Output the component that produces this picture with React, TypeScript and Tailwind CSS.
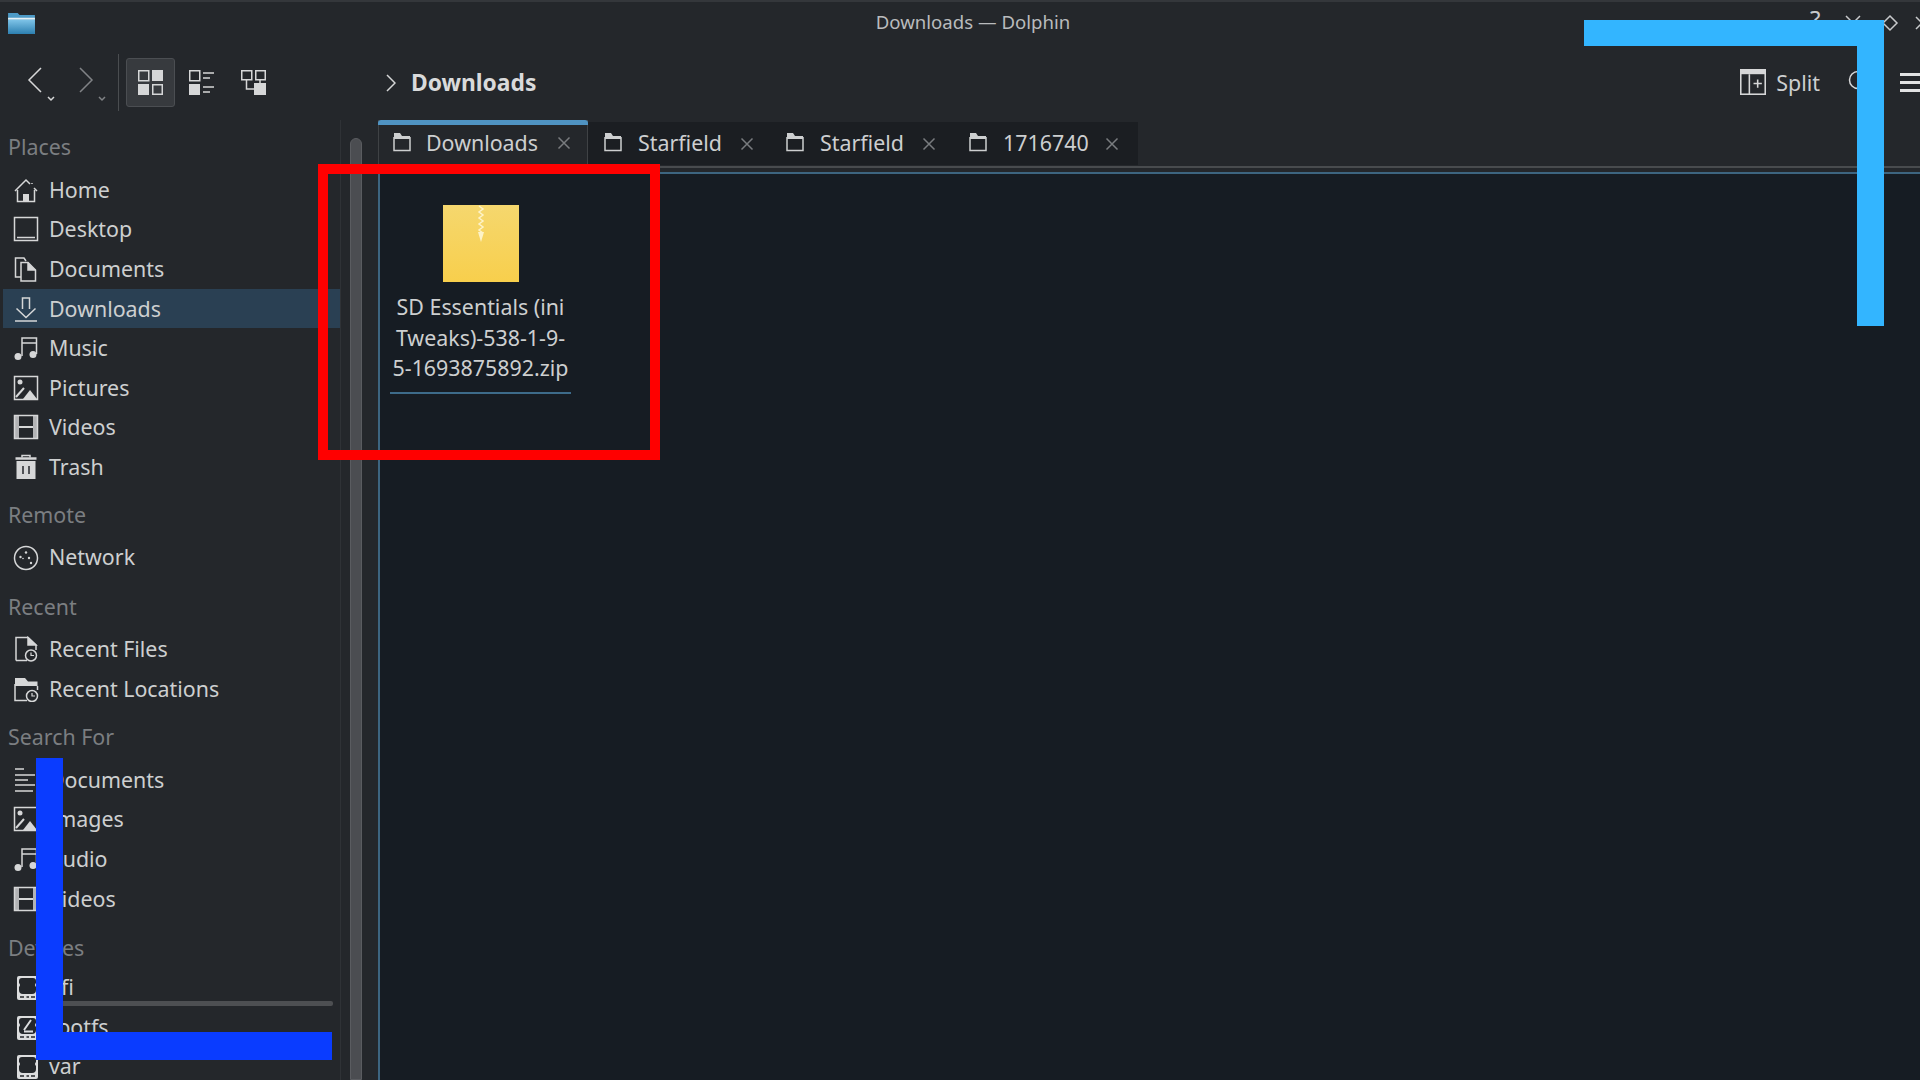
import React from "react";

const S = ({ children, className = "w-[26px] h-[26px]" }: { children: React.ReactNode; className?: string }) => (
  <svg viewBox="0 0 26 26" className={className} fill="none" stroke="currentColor" strokeWidth="1.5">
    {children}
  </svg>
);

const Home = () => (
  <S>
    <path d="M2 14 L13 3 L17 7" />
    <path d="M21 11 L24 14" />
    <path d="M19 6 V6.8" strokeWidth="2" />
    <path d="M4.500 13 V24.500 H21.500 V13" />
    <rect x="10" y="17" width="6" height="7.500" fill="currentColor" stroke="none" />
  </S>
);
const Desktop = () => (
  <S>
    <rect x="1.500" y="1.500" width="23" height="23" />
    <path d="M4 21.500 H22" strokeWidth="1.500" />
  </S>
);
const Documents = () => (
  <S>
    <path d="M8 21 H2.500 V2 H11 L13 5" />
    <path d="M8 6.500 H15 L22.500 14 V25 H8 Z" />
    <path d="M15 6.500 V14 H22.500" fill="currentColor" />
  </S>
);
const Download = () => (
  <S>
    <path d="M9.500 13 V2 H16.500 V13" />
    <path d="M3.500 12.500 L13 21.500 L22.500 12.500" />
    <path d="M2 25 H24" />
  </S>
);
const Music = () => (
  <S>
    <path d="M9 21 V3 H23.500 V19" />
    <path d="M9 8 H23.500" />
    <circle cx="5" cy="21.500" r="3.500" fill="currentColor" stroke="none" />
    <circle cx="20" cy="19.500" r="3.500" fill="currentColor" stroke="none" />
  </S>
);
const Pictures = () => (
  <S>
    <rect x="1.500" y="1.500" width="23" height="23" />
    <circle cx="7" cy="7" r="2.500" fill="currentColor" stroke="none" />
    <path d="M3 22 L11 13" strokeWidth="2" />
    <path d="M10 24 L17 15 L24 24 Z" fill="currentColor" stroke="none" />
  </S>
);
const Film = () => (
  <S>
    <rect x="1.500" y="1.500" width="23" height="23" />
    <path d="M1.500 1.500 H6 V24.500 H1.500 Z M20 1.500 H24.500 V24.500 H20 Z" fill="currentColor" stroke="none" opacity="0.8" />
    <path d="M6 13 H20" strokeWidth="2" />
  </S>
);
const Trash = () => (
  <S>
    <path d="M3.500 7 H22.500 V25 H3.500 Z M12 7 V14" fill="currentColor" stroke="none" />
    <path d="M2.500 4.500 H23.500" strokeWidth="2.500" />
    <path d="M9 3.500 V1.500 H17 V3.500" />
    <path d="M10 12 V20 M16 12 V20" stroke="#24272b" strokeWidth="1.500" />
  </S>
);
const Network = () => (
  <S>
    <circle cx="13" cy="13" r="11.500" />
    <circle cx="13" cy="7.500" r="1.200" fill="currentColor" stroke="none" />
    <circle cx="7.500" cy="12" r="1.200" fill="currentColor" stroke="none" />
    <circle cx="16" cy="13" r="1.200" fill="currentColor" stroke="none" />
    <circle cx="18" cy="18" r="1.200" fill="currentColor" stroke="none" />
    <circle cx="10" cy="13.500" r="0.800" fill="currentColor" stroke="none" />
  </S>
);
const Clock = ({ cx, cy }: { cx: number; cy: number }) => (
  <>
    <circle cx={cx} cy={cy} r="5.500" fill="#24272b" />
    <path d={`M${cx} ${cy - 3} V${cy} H${cx + 3}`} strokeWidth="1.200" />
  </>
);
const RecentFile = () => (
  <S>
    <path d="M3 24.500 V1.500 H15 L23 9 V14" />
    <path d="M15 1.500 V9 H23 Z" fill="currentColor" />
    <path d="M3 24.500 H14" />
    <Clock cx={18} cy={19.500} />
  </S>
);
const RecentFolder = () => (
  <S>
    <path d="M2 8 V2 H12 L15 5.500 H24.500 V10 H2 Z" fill="currentColor" stroke="none" />
    <path d="M2 8 V24.500 H14" />
    <path d="M24.500 10 V14" />
    <Clock cx={19} cy={20} />
  </S>
);
const TextLines = () => (
  <S>
    <path d="M2 2 H11 M2 8 H22 M2 13 H15 M2 18 H22 M2 24 H20" />
  </S>
);
const Drive = ({ root }: { root?: boolean }) => (
  <svg viewBox="0 0 21 24" className="w-[21px] h-[24px] ml-[3px] mt-[2px] shrink-0" fill="none">
    <rect x="0" y="0" width="21" height="24" rx="2" fill="#dcddde" />
    <path d="M5 2 H16 Q19 2 19 5 V7 Q17 9 19 11 V14 Q19 18 15 18 H6 Q2 18 2 14 V11 Q4 9 2 7 V5 Q2 2 5 2 Z" fill="#24272b" />
    <path d="M3 21 H7 M9.500 21 H12 M14 21 H18" stroke="#24272b" strokeWidth="1.500" />
    {root && <path d="M7 14 L14 4 M7 15.500 H16" stroke="#dcddde" strokeWidth="2" />}
  </svg>
);

const TabFolder = () => (
  <svg viewBox="0 0 18 20" className="w-[18px] h-[20px] shrink-0 -mt-[3px]" fill="none" stroke="currentColor" strokeWidth="1.500">
    <path d="M1 5 V1 H7 L9 4 H17 V7 H1 Z" fill="currentColor" stroke="none" />
    <path d="M1 5 V18.500 H17 V5" />
  </svg>
);
const TabClose = () => (
  <svg viewBox="0 0 14 14" className="w-[14px] h-[14px] text-[#797c7f]" fill="none" stroke="currentColor" strokeWidth="1.500">
    <path d="M1.500 1.500 L12.500 12.500 M12.500 1.500 L1.500 12.500" />
  </svg>
);

const Row = ({ icon, label, active }: { icon: React.ReactNode; label: string; active?: boolean }) => (
  <div className={`h-[39.6px] flex items-center ml-[3px] pl-[10px] text-[21.4px] text-[#cdcfd0] ${active ? "bg-[#2a4053]" : ""}`}>
    <span className="w-[26px] h-[26px] flex items-center justify-center shrink-0 text-[#d6d7d8]">{icon}</span>
    <span className="ml-[10px] whitespace-nowrap">{label}</span>
  </div>
);
const Head = ({ label, className }: { label: string; className: string }) => (
  <div className={`h-[39px] flex items-center pl-[8px] text-[21.4px] text-[#7b7e81] ${className}`}>{label}</div>
);

const Tab = ({ label, width }: { label: string; width: string }) => (
  <div className={`${width} h-full flex items-center pl-[16px] text-[#cdcfd0]`}>
    <TabFolder />
    <span className="ml-[16px] w-[84px] text-[21.4px] whitespace-nowrap">{label}</span>
    <span className="ml-[18px]"><TabClose /></span>
  </div>
);

export default function App() {
  return (
    <div className="relative w-[1920px] h-[1080px] overflow-hidden flex flex-col bg-[#24272b] font-['Noto_Sans',sans-serif]">
      {/* title bar */}
      <div className="h-[44px] shrink-0 flex items-center border-t-2 border-[#34373b]">
        <svg viewBox="0 0 30 24" className="ml-[7px] w-[29px] h-[23px] shrink-0">
          <defs>
            <linearGradient id="fold" x1="0" y1="0" x2="0" y2="1">
              <stop offset="0" stopColor="#7fc4e8" />
              <stop offset="1" stopColor="#2c7fb0" />
            </linearGradient>
          </defs>
          <path d="M1 1 H11 L13 3 H29 V23 H1 Z" fill="#4d9ac6" />
          <rect x="1" y="6" width="28" height="2" fill="#e6f0f5" />
          <rect x="1" y="8" width="28" height="15" rx="1" fill="url(#fold)" />
        </svg>
        <div className="flex-1 text-center pl-[102px] pb-[3px] text-[#b9bbbd] text-[18.6px] whitespace-nowrap">Downloads — Dolphin</div>
        <div className="w-[112px] h-full flex items-center text-[#c8cacc]">
          <span className="ml-[2px] w-[20px] shrink-0 -mt-[8px] text-[24px] leading-none">?</span>
          <svg viewBox="0 0 18 18" className="ml-[14px] -mt-[8px] w-[18px] h-[18px] shrink-0" fill="none" stroke="currentColor" strokeWidth="1.500"><path d="M2 6 L9 13 L16 6" /></svg>
          <svg viewBox="0 0 18 18" className="ml-[19px] -mt-[1px] w-[18px] h-[18px] shrink-0" fill="none" stroke="currentColor" strokeWidth="1.500"><path d="M9 2 L16 9 L9 16 L2 9 Z" /></svg>
          <svg viewBox="0 0 18 18" className="ml-[14px] w-[18px] h-[18px] shrink-0" fill="none" stroke="currentColor" strokeWidth="1.500"><path d="M3 3 L15 15 M15 3 L3 15" /></svg>
        </div>
      </div>

      {/* toolbar */}
      <div className="h-[76px] shrink-0 flex items-center text-[#d6d7d8]">
        <svg viewBox="0 0 34 44" className="ml-[26px] w-[34px] h-[44px] shrink-0" fill="none" stroke="currentColor" strokeWidth="1.500">
          <path d="M15 8 L3 20 L15 32" />
          <path d="M22 37 L25 40 L28 37" strokeWidth="1.500" />
        </svg>
        <svg viewBox="0 0 34 44" className="ml-[18px] w-[34px] h-[44px] shrink-0 text-[#808386]" fill="none" stroke="currentColor" strokeWidth="1.500">
          <path d="M2 8 L14 20 L2 32" />
          <path d="M21 37 L24 40 L27 37" strokeWidth="1.500" />
        </svg>
        <div className="ml-[6px] w-px h-[57px] bg-[#4a4d50] shrink-0" />
        <div className="ml-[7px] w-[49px] h-[49px] rounded-[3px] bg-[#373a3e] border border-[#4b4e52] flex items-center justify-center shrink-0">
          <svg viewBox="0 0 25 25" className="w-[25px] h-[25px]" fill="none" stroke="currentColor" strokeWidth="1.500">
            <rect x="0.750" y="0.750" width="10" height="10" />
            <rect x="14" y="0" width="11" height="11" fill="currentColor" stroke="none" />
            <rect x="0" y="14" width="11" height="11" fill="currentColor" stroke="none" />
            <rect x="14.750" y="14.750" width="9.500" height="9.500" />
          </svg>
        </div>
        <svg viewBox="0 0 25 25" className="ml-[14px] w-[25px] h-[25px] shrink-0" fill="none" stroke="currentColor" strokeWidth="1.500">
          <rect x="0.750" y="0.750" width="10" height="10" />
          <rect x="0" y="14" width="11" height="11" fill="currentColor" stroke="none" />
          <path d="M14 3 H25 M14 8 H21 M14 17 H25 M14 22 H21" />
        </svg>
        <svg viewBox="0 0 25 25" className="ml-[27px] w-[25px] h-[25px] shrink-0" fill="none" stroke="currentColor" strokeWidth="1.500">
          <rect x="0.750" y="0.750" width="10" height="9" />
          <rect x="14.750" y="0.750" width="9.500" height="9" />
          <path d="M5.500 10 V19 H13 M19 10 V13" />
          <rect x="13" y="13" width="12" height="12" fill="currentColor" stroke="none" />
        </svg>
        <svg viewBox="0 0 10 18" className="ml-[120px] mt-[1px] w-[10px] h-[18px] shrink-0" fill="none" stroke="currentColor" strokeWidth="1.500">
          <path d="M1 1 L9 9 L1 17" />
        </svg>
        <span className="ml-[15px] mt-[2px] text-[22.8px] font-bold text-[#d9dadb]">Downloads</span>
        <div className="flex-1" />
        <svg viewBox="0 0 25 25" className="w-[26px] h-[26px] shrink-0" fill="none" stroke="currentColor" strokeWidth="1.500">
          <rect x="0.750" y="0.750" width="23.500" height="23.500" />
          <rect x="0" y="0" width="25" height="5" fill="currentColor" stroke="none" />
          <path d="M9 5 V24 M13 14 H21 M17 10 V18" />
        </svg>
        <span className="ml-[10px] mt-[2px] text-[21.4px] text-[#cdcfd0]">Split</span>
        <svg viewBox="0 0 24 24" className="ml-[28px] w-[24px] h-[24px] shrink-0" fill="none" stroke="currentColor" strokeWidth="1.500">
          <circle cx="10" cy="10" r="8.500" />
          <path d="M16 16 L23 23" />
        </svg>
        <div className="ml-[28px] w-[20px] flex flex-col gap-[5px] shrink-0">
          <div className="h-[3px] bg-[#e2e3e4]" />
          <div className="h-[3px] bg-[#e2e3e4]" />
          <div className="h-[3px] bg-[#e2e3e4]" />
        </div>
      </div>

      {/* body */}
      <div className="flex-1 min-h-0 flex">
        <aside className="w-[341px] shrink-0 overflow-hidden border-r border-[#2f3236]">
          <Head label="Places" className="mt-[8px] mb-[3px]" />
          <Row icon={<Home />} label="Home" />
          <Row icon={<Desktop />} label="Desktop" />
          <Row icon={<Documents />} label="Documents" />
          <Row icon={<Download />} label="Downloads" active />
          <Row icon={<Music />} label="Music" />
          <Row icon={<Pictures />} label="Pictures" />
          <Row icon={<Film />} label="Videos" />
          <Row icon={<Trash />} label="Trash" />
          <Head label="Remote" className="mt-[9px] mb-[3px]" />
          <Row icon={<Network />} label="Network" />
          <Head label="Recent" className="mt-[10px] mb-[3px]" />
          <Row icon={<RecentFile />} label="Recent Files" />
          <Row icon={<RecentFolder />} label="Recent Locations" />
          <Head label="Search For" className="mt-[9px] mb-[3.500px]" />
          <Row icon={<TextLines />} label="Documents" />
          <Row icon={<Pictures />} label="Images" />
          <Row icon={<Music />} label="Audio" />
          <Row icon={<Film />} label="Videos" />
          <Head label="Devices" className="mt-[10px]" />
          <Row icon={<Drive />} label="efi" />
          <Row icon={<Drive root />} label="rootfs" />
          <Row icon={<Drive />} label="var" />
        </aside>

        <div className="w-[37px] shrink-0 pl-[9px] pt-[18px]">
          <div className="w-[12px] h-full rounded-t-[6px] bg-[#4b4d51] border border-[#5a5c60]" />
        </div>

        <main className="flex-1 min-w-0 flex flex-col">
          <div className="h-[46px] shrink-0 flex">
            <div className="w-[210px] h-full shrink-0 flex flex-col border-x border-[#3f4245]">
              <div className="h-[5px] -mx-px rounded-t-[3px] bg-[#4f93c2]" />
              <div className="flex-1 flex items-center pl-[14px] pb-[5px] text-[#cdcfd0]">
                <TabFolder />
                <span className="ml-[15px] w-[113px] text-[21.4px] whitespace-nowrap">Downloads</span>
                <span className="ml-[18px]"><TabClose /></span>
              </div>
            </div>
            <div className="mt-[2px] h-[43px] flex bg-[#1b1e22]">
              <Tab label="Starfield" width="w-[182px]" />
              <Tab label="Starfield" width="w-[183px]" />
              <Tab label="1716740" width="w-[185px]" />
            </div>
          </div>
          <div className="h-[6px] shrink-0 flex">
            <div className="w-[210px] border-x border-[#3f4245]" />
            <div className="flex-1 border-t-2 border-[#484b4e]" />
          </div>
          <div className="flex-1 min-h-0 bg-[#161c23] border-t-2 border-l-2 border-[#3d6580]">
            <div className="ml-[10px] mt-[31px] w-[181px] flex flex-col items-center border-b-2 border-[#3d6b8a] pb-[8px]">
              <svg viewBox="0 0 76 77" className="w-[76px] h-[77px]">
                <defs>
                  <linearGradient id="zip" x1="0" y1="0" x2="0" y2="1">
                    <stop offset="0" stopColor="#f5d76e" />
                    <stop offset="1" stopColor="#f8cf4c" />
                  </linearGradient>
                </defs>
                <rect width="76" height="77" fill="url(#zip)" />
                <path d="M36 1 L40 4 L36 7 L40 10 L36 13 L40 16 L36 19 L40 22 L36 25 L40 28" fill="none" stroke="#fdf3c8" strokeWidth="1.500" />
                <path d="M35 27 H41 L38 37 Z" fill="#fdf3c8" />
              </svg>
              <div className="mt-[10px] text-center text-[21.4px] leading-[30.5px] text-[#cdcfd0] whitespace-nowrap">
                <div>SD Essentials (ini</div>
                <div>Tweaks)-538-1-9-</div>
                <div>5-1693875892.zip</div>
              </div>
            </div>
          </div>
        </main>
      </div>

      {/* sidebar overlay scrollbar */}
      <div className="absolute left-[40px] top-[1001px] w-[293px] h-[5px] rounded-[2px] bg-[#4d4f52]" />

      {/* annotations drawn over the window */}
      <div className="absolute left-[318px] top-[164px] w-[342px] h-[296px] border-[10px] border-[#ff0000]" />
      <div className="absolute left-[1584px] top-[20px] w-[300px] h-[26px] bg-[#33b5ff]" />
      <div className="absolute left-[1857px] top-[20px] w-[27px] h-[306px] bg-[#33b5ff]" />
      <div className="absolute left-[36px] top-[758px] w-[27px] h-[302px] bg-[#0a3cff]" />
      <div className="absolute left-[36px] top-[1032px] w-[296px] h-[28px] bg-[#0a3cff]" />
    </div>
  );
}
